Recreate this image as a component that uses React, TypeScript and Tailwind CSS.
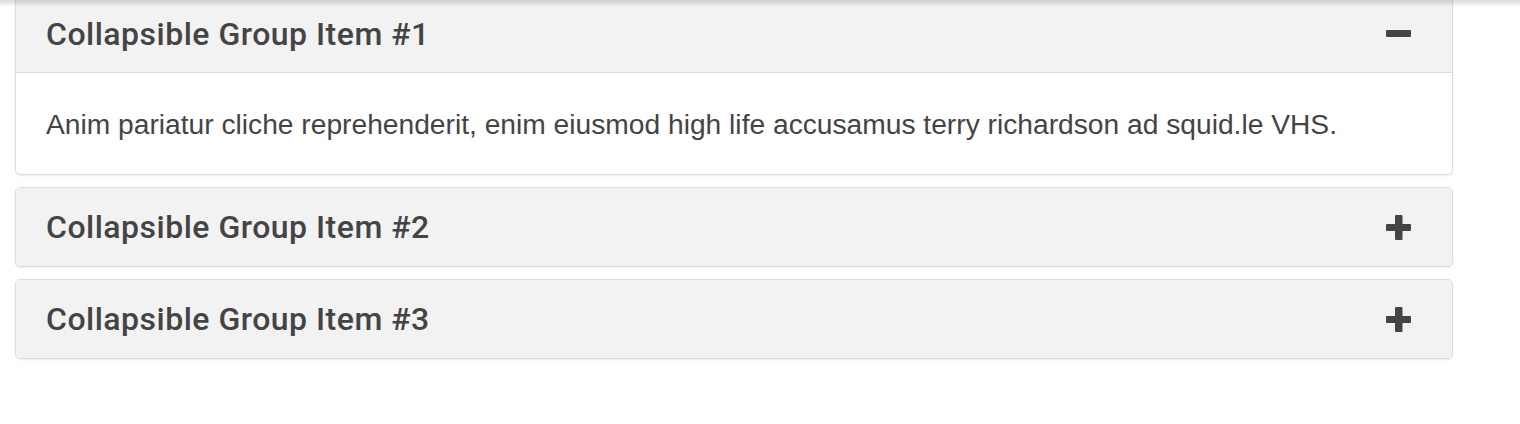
import React, { useState } from 'react';

type Item = { id: number; title: string; body: string };

const items: Item[] = [
  { id: 1, title: 'Collapsible Group Item #1', body: 'Anim pariatur cliche reprehenderit, enim eiusmod high life accusamus terry richardson ad squid.le VHS.' },
  { id: 2, title: 'Collapsible Group Item #2', body: 'Anim pariatur cliche reprehenderit, enim eiusmod high life accusamus terry richardson ad squid.le VHS.' },
  { id: 3, title: 'Collapsible Group Item #3', body: 'Anim pariatur cliche reprehenderit, enim eiusmod high life accusamus terry richardson ad squid.le VHS.' },
];

const PlusMinus: React.FC<{ open: boolean }> = ({ open }) => (
  <svg width="25" height="25" viewBox="0 0 25 25" className="text-[#444]">
    <rect x="0" y="9" width="25" height="7" rx="1" fill="currentColor" />
    {!open && <rect x="9" y="0" width="7.5" height="25" rx="1" fill="currentColor" />}
  </svg>
);

const App: React.FC = () => {
  const [openId, setOpenId] = useState<number | null>(1);

  return (
    <div className="relative min-h-[424px] bg-white overflow-hidden font-['Liberation_Sans',Arial,sans-serif] text-[#444]">
      {/* top scroll shadow */}
      <div className="pointer-events-none absolute inset-x-0 top-0 z-10 h-[7px] bg-gradient-to-b from-black/15 to-transparent" />

      <div className="-mt-[6px] ml-[15px] w-[1438px] flex flex-col gap-[12px]">
        {items.map((item) => {
          const open = openId === item.id;
          return (
            <div
              key={item.id}
              className="border border-[#dcdcdc] rounded-[5px] bg-white shadow-[0_1px_2px_rgba(0,0,0,0.08)] overflow-hidden"
            >
              <button
                type="button"
                onClick={() => setOpenId(open ? null : item.id)}
                className={`w-full h-[78px] flex items-center justify-between pl-[30px] pr-[41px] bg-[#f2f2f2] text-left ${open ? 'border-b border-[#dcdcdc]' : ''}`}
              >
                <span className="font-['Roboto',Arial,sans-serif] font-medium text-[32px] tracking-[0.5px] leading-none">{item.title}</span>
                <PlusMinus open={open} />
              </button>
              {open && (
                <div className="px-[30px] pt-[31px] pb-[30px] text-[28.2px] leading-[40px]">{item.body}</div>
              )}
            </div>
          );
        })}
      </div>
    </div>
  );
};

export default App;
